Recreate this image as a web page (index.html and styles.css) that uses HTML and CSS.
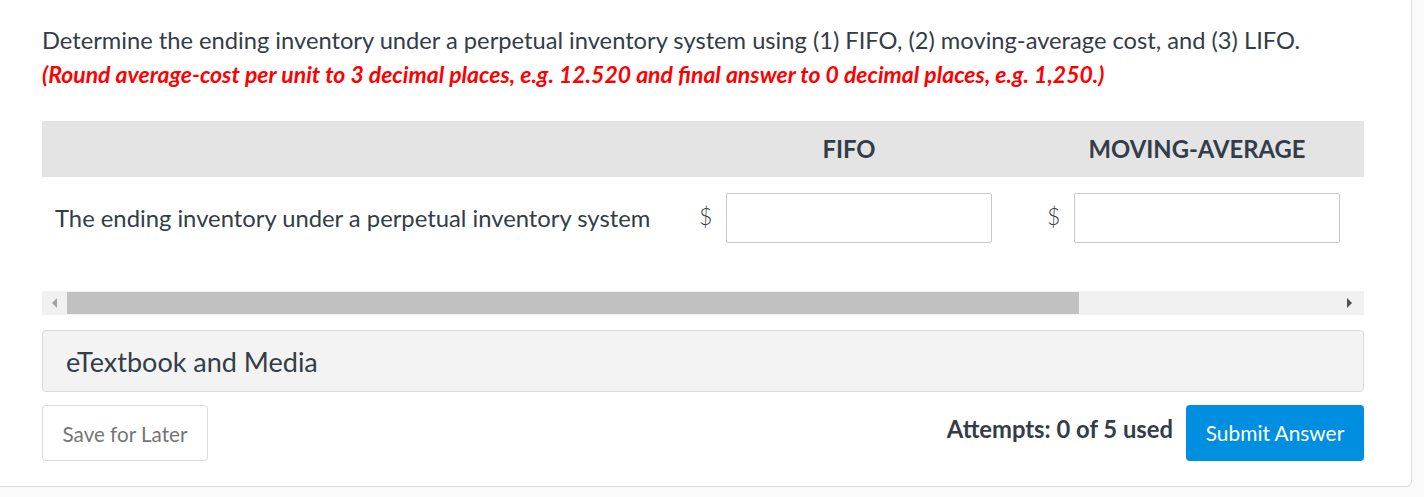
FILE: index.html
```
<!DOCTYPE html>
<html>
<head>
<meta charset="utf-8">
<link rel="stylesheet" href="styles.css">
</head>
<body>
<div class="card">
  <div class="question">
    <p class="prompt">Determine the ending inventory under a perpetual inventory system using (1) FIFO, (2) moving-average cost, and (3) LIFO.</p>
    <p class="note">(Round average-cost per unit to 3 decimal places, e.g. 12.520 and final answer to 0 decimal places, e.g. 1,250.)</p>
  </div>
  <div class="table-wrap">
    <div class="table">
      <div class="row head">
        <div class="cell label"></div>
        <div class="cell col">FIFO</div>
        <div class="cell col">MOVING-AVERAGE</div>
        <div class="cell col"></div>
      </div>
      <div class="row body">
        <div class="cell label">The ending inventory under a perpetual inventory system</div>
        <div class="cell col entry"><span class="cur">$</span><span class="input"></span></div>
        <div class="cell col entry"><span class="cur">$</span><span class="input"></span></div>
        <div class="cell col"></div>
      </div>
    </div>
  </div>
  <div class="scrollbar">
    <span class="arrow left"></span>
    <div class="track"><div class="thumb"></div></div>
    <span class="arrow right"></span>
  </div>
  <div class="media">eTextbook and Media</div>
  <div class="actions">
    <button class="btn save">Save for Later</button>
    <div class="right">
      <span class="attempts">Attempts: 0 of 5 used</span>
      <button class="btn submit">Submit Answer</button>
    </div>
  </div>
</div>
</body>
</html>
```
FILE: styles.css
```
html, body {
  margin: 0;
  padding: 0;
  background: #fafafa;
}
body {
  font-family: Lato, "Noto Sans", sans-serif;
  color: #333d47;
  width: 1424px;
  height: 497px;
  overflow: hidden;
}
.card {
  box-sizing: border-box;
  width: 1412px;
  height: 487px;
  background: #fff;
  border-right: 1px solid #dcdcdc;
  border-bottom: 1px solid #dcdcdc;
  border-bottom-right-radius: 6px;
  padding: 23px 47px 0 42px;
}
.question p {
  margin: 0;
  line-height: 34px;
  white-space: nowrap;
}
.prompt {
  font-size: 23.7px;
}
.note {
  font-size: 23px;
  color: #ff0000;
  font-weight: bold;
  font-style: italic;
}
.table-wrap {
  margin-top: 30px;
  width: 1322px;
  overflow: hidden;
}
.table {
  width: 1677px;
}
.row {
  display: flex;
}
.head {
  background: #e4e4e4;
  height: 56px;
  align-items: center;
  font-weight: bold;
  font-size: 23.8px;
}
.cell.label {
  box-sizing: border-box;
  width: 633px;
  padding-left: 13px;
  flex: none;
  white-space: nowrap;
}
.cell.col {
  width: 348px;
  flex: none;
  text-align: center;
}
.body {
  height: 81px;
  align-items: center;
  font-size: 23.8px;
}
.entry {
  display: flex;
  align-items: center;
}
.cur {
  margin-left: 24px;
  width: 27px;
  text-align: left;
  font-size: 23px;
  font-weight: 300;
  margin-top: -4px;
}
.input {
  box-sizing: border-box;
  width: 266px;
  height: 50px;
  border: 1px solid #c8c8c8;
  border-radius: 2px;
  background: #fff;
}
.scrollbar {
  margin-top: 33px;
  width: 1322px;
  height: 24px;
  background: #f1f1f1;
  display: flex;
  align-items: center;
}
.arrow {
  width: 25px;
  height: 24px;
  flex: none;
  position: relative;
}
.arrow::after {
  content: "";
  position: absolute;
  top: 7px;
  border-top: 5px solid transparent;
  border-bottom: 5px solid transparent;
}
.arrow.left::after {
  left: 10px;
  border-right: 5px solid #a3a3a3;
}
.arrow.right::after {
  left: 8px;
  border-left: 5px solid #505050;
}
.track {
  flex: 1;
  height: 22px;
}
.thumb {
  width: 1012px;
  height: 22px;
  background: #c1c1c1;
}
.media {
  box-sizing: border-box;
  margin-top: 15px;
  width: 1322px;
  height: 62px;
  background: #f3f3f3;
  border: 1px solid #dcdcdc;
  border-radius: 4px;
  padding-left: 23px;
  display: flex;
  align-items: center;
  font-size: 27px;
}
.actions {
  margin-top: 13px;
  width: 1322px;
  display: flex;
  justify-content: space-between;
  align-items: center;
}
.btn {
  font-family: Lato, "Noto Sans", sans-serif;
  box-sizing: border-box;
  height: 56px;
  border-radius: 4px;
  cursor: pointer;
  white-space: nowrap;
  padding: 0;
}
.save {
  width: 166px;
  background: #fff;
  border: 1px solid #dcdcdc;
  color: #757575;
  font-size: 20.6px;
  padding-top: 1px;
}
.right {
  display: flex;
  align-items: center;
}
.attempts {
  font-weight: bold;
  font-size: 23.8px;
  margin-right: 13px;
  margin-top: -9px;
}
.submit {
  width: 178px;
  background: #008ee0;
  border: none;
  color: #fff;
  font-size: 20.9px;
  padding-bottom: 1px;
}
```
